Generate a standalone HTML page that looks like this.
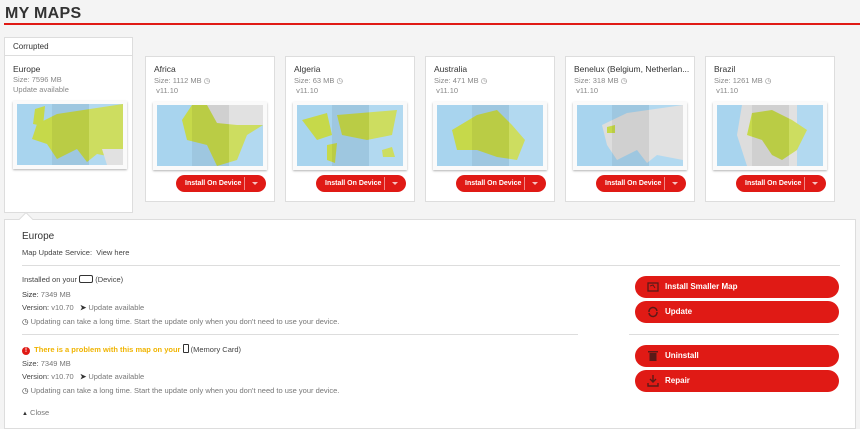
<!DOCTYPE html>
<html><head><meta charset="utf-8"><style>
*{box-sizing:border-box;margin:0;padding:0}
body{width:860px;height:420px;overflow:hidden;background:#f4f4f4;font-family:"Liberation Sans",sans-serif;color:#333;position:relative}
.abs{position:absolute}
h1{position:absolute;left:5px;top:5px;font-size:16px;font-weight:bold;color:#333;letter-spacing:0.3px}
.redline{position:absolute;left:4px;top:23px;width:856px;height:2px;background:#e01a15}
.card{position:absolute;background:#fff;border:1px solid #ddd;width:130px}
.card .t{position:absolute;left:8px;top:7px;font-size:8.5px;color:#333;white-space:nowrap}
.card .s{position:absolute;left:8px;top:19px;font-size:7.5px;color:#888;white-space:nowrap;line-height:9.5px}
.map{position:absolute;width:114px;height:68px;background:#fafafa;box-shadow:0 1px 2px rgba(0,0,0,.3)}
.map svg{position:absolute;left:4px;top:3px}
.btn{position:absolute;width:90px;height:17px;border-radius:9px;background:#e01a15;color:#fff;font-size:7px;font-weight:bold;line-height:17px;padding-left:9px}
.btn:after{content:"";position:absolute;left:68px;top:2px;width:1px;height:13px;background:#f08a86}
.btn i{position:absolute;left:76px;top:7px;border-left:3px solid transparent;border-right:3px solid transparent;border-top:3px solid #f6c0be}
.panel{position:absolute;left:4px;top:219px;width:852px;height:210px;background:#fff;border:1px solid #ddd}
.p{position:absolute;font-size:7.5px;color:#444;white-space:nowrap}
.hr{position:absolute;height:1px;background:#ddd}
.rb{position:absolute;left:635px;width:204px;height:22px;border-radius:11px;background:#e01a15;color:#fff;font-size:8px;font-weight:bold;line-height:22px;padding-left:30px}
.rb svg{position:absolute;left:12px;top:5px}
</style></head><body>
<h1>MY MAPS</h1>
<div class="redline"></div>

<!-- Europe selected -->
<div class="card" style="left:4px;top:37px;height:176px;width:129px">
 <div style="position:absolute;left:0;top:0;right:0;height:18px;border-bottom:1px solid #ddd;font-size:8px;line-height:18px;padding-left:8px">Corrupted</div>
 <div class="t" style="top:26px">Europe</div>
 <div class="s" style="top:37px">Size: 7596 MB<br>Update available</div>
 <div class="map" style="left:8px;top:63px"><svg width="106" height="61"><rect width="106" height="61" fill="#a8d4ee"/><path d="M20 20 L40 10 L106 0 L106 55 L80 50 L70 58 L60 45 L40 55 L30 40 L15 35 Z" fill="#c6d94a"/><path d="M18 5 L28 2 L26 22 L16 20 Z" fill="#c6d94a"/><path d="M85 45 L106 45 L106 61 L90 61 Z" fill="#ddd"/><rect x="35" width="37" height="61" fill="#000" opacity=".06"/><rect x="72" width="34" height="61" fill="#fff" opacity=".12"/></svg></div>
</div>

<!-- other cards -->
<div class="card" style="left:145px;top:56px;height:146px">
 <div class="t">Africa</div><div class="s">Size: 1112 MB &#9719;<br>&nbsp;v11.10</div>
 <div class="map" style="left:7px;top:45px"><svg width="106" height="61"><rect width="106" height="61" fill="#a8d4ee"/><path d="M35 0 L106 0 L106 20 L90 30 L80 55 L60 61 L50 40 L30 35 L25 15 Z" fill="#c6d94a"/><path d="M50 0 L106 0 L106 20 L80 20 L60 18 Z" fill="#ddd"/><rect x="35" width="37" height="61" fill="#000" opacity=".06"/><rect x="72" width="34" height="61" fill="#fff" opacity=".12"/></svg></div>
 <div class="btn" style="left:30px;top:118px">Install On Device<i></i></div>
</div>
<div class="card" style="left:285px;top:56px;height:146px">
 <div class="t">Algeria</div><div class="s">Size: 63 MB &#9719;<br>&nbsp;v11.10</div>
 <div class="map" style="left:7px;top:45px"><svg width="106" height="61"><rect width="106" height="61" fill="#a8d4ee"/><path d="M5 15 L30 8 L35 30 L20 35 Z M40 10 L100 5 L95 30 L70 35 L45 30 Z M30 40 L40 38 L38 58 L30 55 Z M85 45 L95 42 L98 52 L86 52 Z" fill="#c6d94a"/><rect x="35" width="37" height="61" fill="#000" opacity=".06"/><rect x="72" width="34" height="61" fill="#fff" opacity=".12"/></svg></div>
 <div class="btn" style="left:30px;top:118px">Install On Device<i></i></div>
</div>
<div class="card" style="left:425px;top:56px;height:146px">
 <div class="t">Australia</div><div class="s">Size: 471 MB &#9719;<br>&nbsp;v11.10</div>
 <div class="map" style="left:7px;top:45px"><svg width="106" height="61"><rect width="106" height="61" fill="#a8d4ee"/><path d="M15 25 L40 10 L60 5 L75 20 L88 35 L80 55 L60 52 L40 45 L20 45 Z" fill="#c6d94a"/><rect x="35" width="37" height="61" fill="#000" opacity=".06"/><rect x="72" width="34" height="61" fill="#fff" opacity=".12"/></svg></div>
 <div class="btn" style="left:30px;top:118px">Install On Device<i></i></div>
</div>
<div class="card" style="left:565px;top:56px;height:146px">
 <div class="t">Benelux (Belgium, Netherlan...</div><div class="s">Size: 318 MB &#9719;<br>&nbsp;v11.10</div>
 <div class="map" style="left:7px;top:45px"><svg width="106" height="61"><rect width="106" height="61" fill="#a8d4ee"/><path d="M25 20 L50 8 L106 0 L106 55 L80 50 L70 58 L60 45 L40 55 L30 40 Z" fill="#ddd"/><path d="M30 22 L38 20 L38 28 L30 28 Z" fill="#c6d94a"/><rect x="35" width="37" height="61" fill="#000" opacity=".06"/><rect x="72" width="34" height="61" fill="#fff" opacity=".12"/></svg></div>
 <div class="btn" style="left:30px;top:118px">Install On Device<i></i></div>
</div>
<div class="card" style="left:705px;top:56px;height:146px">
 <div class="t">Brazil</div><div class="s">Size: 1261 MB &#9719;<br>&nbsp;v11.10</div>
 <div class="map" style="left:7px;top:45px"><svg width="106" height="61"><rect width="106" height="61" fill="#a8d4ee"/><path d="M25 0 L80 0 L80 61 L30 61 L20 30 Z" fill="#ddd"/><path d="M35 8 L55 5 L75 15 L90 25 L80 45 L65 55 L55 50 L45 35 L30 30 Z" fill="#c6d94a"/><rect x="35" width="37" height="61" fill="#000" opacity=".06"/><rect x="72" width="34" height="61" fill="#fff" opacity=".12"/></svg></div>
 <div class="btn" style="left:30px;top:118px">Install On Device<i></i></div>
</div>

<!-- detail panel -->
<div class="panel"></div>
<div class="abs" style="left:21px;top:214px;width:10px;height:10px;background:#fff;border-left:1px solid #ddd;border-top:1px solid #ddd;transform:rotate(45deg)"></div>
<div class="p" style="left:22px;top:231px;font-size:10px;color:#333">Europe</div>
<div class="p" style="left:22px;top:248px">Map Update Service: &nbsp;View here</div>
<div class="hr" style="left:22px;top:265px;width:818px"></div>
<div class="p" style="left:22px;top:275px">Installed on your <span style="display:inline-block;width:14px;height:8px;border:1.5px solid #333;border-radius:2px;vertical-align:-1px"></span> (Device)</div>
<div class="p" style="left:22px;top:290px"><b style="font-weight:normal;color:#333">Size:</b> <span style="color:#777">7349 MB</span></div>
<div class="p" style="left:22px;top:303px">Version: <span style="color:#777">v10.70 &nbsp;&nbsp;<b style="color:#333">&#10148;</b> Update available</span></div>
<div class="p" style="left:22px;top:317px;color:#777"><span style="color:#333">&#9719;</span> Updating can take a long time. Start the update only when you don't need to use your device.</div>
<div class="hr" style="left:22px;top:334px;width:556px"></div>
<div class="hr" style="left:629px;top:334px;width:210px"></div>
<div class="p" style="left:22px;top:344px"><span style="display:inline-block;width:8px;height:8px;border-radius:50%;background:#e01a15;color:#fff;font-size:6px;text-align:center;line-height:8px;font-weight:bold">!</span> &nbsp;<span style="color:#f0b400;font-weight:bold">There is a problem with this map on your</span> <span style="display:inline-block;width:6px;height:9px;border:1.5px solid #333;border-radius:1px;vertical-align:-1px"></span> (Memory Card)</div>
<div class="p" style="left:22px;top:359px">Size: <span style="color:#777">7349 MB</span></div>
<div class="p" style="left:22px;top:372px">Version: <span style="color:#777">v10.70 &nbsp;&nbsp;<b style="color:#333">&#10148;</b> Update available</span></div>
<div class="p" style="left:22px;top:386px;color:#777"><span style="color:#333">&#9719;</span> Updating can take a long time. Start the update only when you don't need to use your device.</div>
<div class="p" style="left:22px;top:408px;color:#777"><span style="color:#333;font-size:6px">&#9650;</span> Close</div>

<div class="rb" style="top:276px"><svg width="12" height="12"><rect x="1" y="2" width="10" height="8" fill="none" stroke="#5a1a18" stroke-width="1.3"/><path d="M3 5 L6 4 L8 7" stroke="#5a1a18" fill="none"/></svg>Install Smaller Map</div>
<div class="rb" style="top:301px"><svg width="12" height="12"><path d="M2 6 A4 4 0 0 1 10 5 M10 6 A4 4 0 0 1 2 7" stroke="#5a1a18" stroke-width="1.5" fill="none"/></svg>Update</div>
<div class="rb" style="top:345px"><svg width="12" height="12"><rect x="2.5" y="3" width="7" height="8" fill="#5a1a18"/><rect x="1" y="1" width="10" height="1.5" fill="#5a1a18"/></svg>Uninstall</div>
<div class="rb" style="top:370px"><svg width="12" height="12"><path d="M6 0 V7 M3 4 L6 7 L9 4 M1 8 V11 H11 V8" stroke="#5a1a18" stroke-width="1.4" fill="none"/></svg>Repair</div>
</body></html>
